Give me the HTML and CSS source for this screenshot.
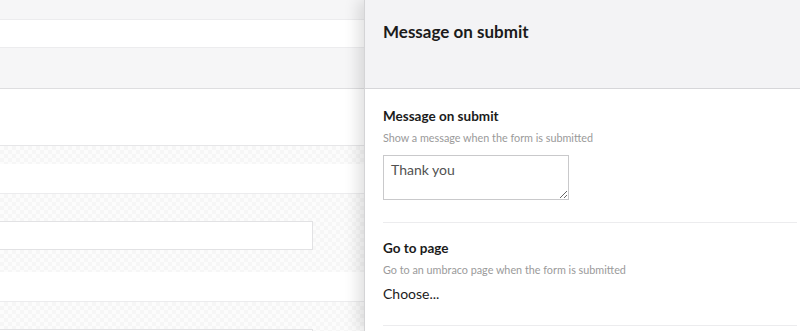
FILE: index.html
```html
<!DOCTYPE html>
<html>
<head>
<meta charset="utf-8">
<link rel="stylesheet" href="styles.css">
</head>
<body>
<div class="app">
  <div class="bg">
    <div class="row r1"></div>
    <div class="row r2"></div>
    <div class="row r3"></div>
    <div class="row r4"></div>
    <div class="row r5"><div class="pat p5"></div></div>
    <div class="row r6"><div class="pat p6"><div class="fake-input"></div></div></div>
    <div class="row r7"><div class="pat p7"><div class="fake-input"></div></div></div>
  </div>
  <div class="panel">
    <div class="panel-head">
      <h1 class="panel-title">Message on submit</h1>
    </div>
    <div class="panel-body">
      <div class="prop">
        <div class="prop-label">Message on submit</div>
        <div class="prop-desc">Show a message when the form is submitted</div>
        <textarea class="prop-textarea">Thank you</textarea>
      </div>
      <div class="prop">
        <div class="prop-label">Go to page</div>
        <div class="prop-desc">Go to an umbraco page when the form is submitted</div>
        <div class="prop-choose">Choose...</div>
      </div>
    </div>
  </div>
</div>
</body>
</html>
```
FILE: styles.css
```css
* { box-sizing: border-box; }
html, body { margin: 0; padding: 0; }
body {
  width: 800px;
  height: 331px;
  overflow: hidden;
  font-family: Lato, "Open Sans", sans-serif;
  background: #fff;
}
.app {
  display: flex;
  width: 800px;
  height: 331px;
  overflow: hidden;
}
.bg {
  width: 364px;
  flex: none;
  display: flex;
  flex-direction: column;
}
.row { border-bottom: 1px solid #ececee; flex: none; }
.r1 { height: 20px; background: #f6f6f7; }
.r2 { height: 28px; background: #fff; }
.r3 { height: 41px; background: #f6f6f7; border-bottom-color: #dedee0; }
.r4 { height: 57px; background: #fff; border-bottom-color: #e6e6e8; }
.r5 { height: 48px; background: #fff; }
.r6 { height: 108px; background: #fff; }
.r7 { height: 40px; background: #fff; border-bottom: none; }
.pat {
  background-color: #fcfcfc;
  background-image: conic-gradient(#f6f6f6 25%, transparent 0 50%, #f6f6f6 0 75%, transparent 0);
  background-size: 8px 8px;
}
.p5 { height: 18px; }
.p6 { height: 78px; padding-top: 27px; }
.p7 { height: 40px; padding-top: 27px; }
.fake-input {
  width: 313px;
  height: 29px;
  background: #fff;
  border: 1px solid #e2e2e4;
  border-left: none;
}
.panel {
  flex: 1;
  position: relative;
  border-left: 1px solid #d4d4d6;
  box-shadow: -6px 0 14px rgba(0,0,0,0.12);
  background: #fff;
  display: flex;
  flex-direction: column;
  overflow: hidden;
}
.panel-head {
  flex: none;
  height: 89px;
  background: #f3f3f5;
  border-bottom: 1px solid #d6d6d9;
  padding: 21px 18px 0 18px;
}
.panel-title {
  margin: 0;
  font-size: 17px;
  font-weight: 700;
  color: #1b1b1b;
  line-height: 22px;
}
.panel-body {
  flex: none;
  padding: 18px 3px 0 18px;
}
.prop {
  border-bottom: 1px solid #ececee;
  padding: 0 0 22px 0;
  margin-bottom: 16px;
}
.prop:last-child { padding-bottom: 22px; }
.prop-label {
  font-size: 13.5px;
  font-weight: 700;
  color: #1b1b1b;
  line-height: 18px;
}
.prop-desc {
  font-size: 10.8px;
  color: #9a9a9a;
  line-height: 14px;
  margin-top: 6px;
}
.prop-textarea {
  display: block;
  margin-top: 10px;
  width: 186px;
  height: 45px;
  border: 1px solid #c9c9cb;
  font-family: Lato, "Open Sans", sans-serif;
  font-size: 14px;
  color: #515151;
  padding: 5px 7px;
  resize: vertical;
  outline: none;
}
.prop-choose {
  margin-top: 8px;
  font-size: 14px;
  color: #1b1b1b;
  line-height: 18px;
}
```
